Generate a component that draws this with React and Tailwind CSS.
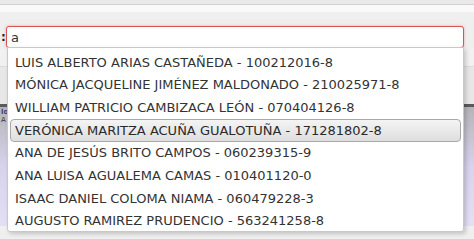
import React from "react";

const people = [
  "LUIS ALBERTO ARIAS CASTAÑEDA - 100212016-8",
  "MÓNICA JACQUELINE JIMÉNEZ MALDONADO - 210025971-8",
  "WILLIAM PATRICIO CAMBIZACA LEÓN - 070404126-8",
  "VERÓNICA MARITZA ACUÑA GUALOTUÑA - 171281802-8",
  "ANA DE JESÚS BRITO CAMPOS - 060239315-9",
  "ANA LUISA AGUALEMA CAMAS - 010401120-0",
  "ISAAC DANIEL COLOMA NIAMA - 060479228-3",
  "AUGUSTO RAMIREZ PRUDENCIO - 563241258-8",
];

const App = () => {
  return (
    <div className="relative w-[474px] h-[239px] overflow-hidden bg-[#ededed] font-['DejaVu_Sans',Verdana,sans-serif]">
      {/* page behind the autocomplete */}
      <div className="h-[5px] bg-[#e9e9e9] border-b border-[#d2d2d2]" />
      <div className="h-[7px] bg-[#f9f9f9]" />
      <div className="h-[14px] bg-[#efefef]" />
      <div className="flex h-[22px] items-center bg-[#efefef]">
        <span className="pl-[1px] text-[12px] leading-none font-bold text-[#222]">:</span>
      </div>
      <div className="h-[19px] bg-[#f1f1f1] border-b border-[#dcdcdc]" />
      <div className="h-[37px] bg-[#e7e7e7]" />
      <div className="h-[3px] bg-[#5a5a5a]" />
      <div className="h-[119px] bg-gradient-to-b from-[#b4b4b8] via-[#d7d3ec] to-[#e3e0f4]">
        <div className="pt-[1px] pl-[1px] text-[7px] leading-[8px] font-bold text-[#3b3f8a]">lo</div>
        <div className="pl-[1px] text-[7px] leading-[8px] text-[#333]">A</div>
      </div>
      <div className="h-[13px] bg-[#efefef]" />

      {/* input */}
      <div className="absolute left-[6px] top-[26px] w-[458px] h-[22px] rounded-[3px] border border-[#d9534f] bg-white shadow-[0_0_3px_rgba(217,83,79,0.45)] flex items-center pl-[4px]">
        <span className="text-[13px] text-[#333] leading-none">a</span>
      </div>

      {/* dropdown */}
      <ul className="absolute left-[7px] top-[47px] w-[457px] h-[185px] bg-white border border-[#c8c8c8] rounded-b-[3px] shadow-[2px_2px_4px_rgba(0,0,0,0.18)] pt-[3px] px-[1px]">
        {people.map((p, i) => (
          <li
            key={p}
            className={
              i === 3
                ? "h-[22.7px] flex items-center pl-[4px] mx-[1px] rounded-[4px] border border-[#a8a8a8] bg-gradient-to-b from-[#f4f4f4] to-[#dedede] text-[13px] text-[#2a2a2a] whitespace-nowrap"
                : "h-[22.7px] flex items-center pl-[6px] text-[13px] text-[#333] whitespace-nowrap"
            }
          >
            {p}
          </li>
        ))}
      </ul>
    </div>
  );
};

export default App;
